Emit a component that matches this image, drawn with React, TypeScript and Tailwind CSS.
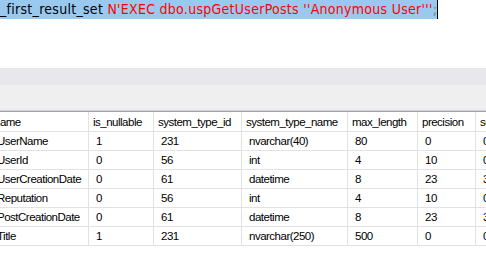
import React from "react";

const columns = [
  { key: "name", label: "name", width: "w-[99px]" },
  { key: "is_nullable", label: "is_nullable", width: "w-[65px]" },
  { key: "system_type_id", label: "system_type_id", width: "w-[88px]" },
  { key: "system_type_name", label: "system_type_name", width: "w-[106px]" },
  { key: "max_length", label: "max_length", width: "w-[70px]" },
  { key: "precision", label: "precision", width: "w-[58px]" },
  { key: "scale", label: "scale", width: "w-[60px]" },
];

const rows = [
  ["UserName", "1", "231", "nvarchar(40)", "80", "0", "0"],
  ["UserId", "0", "56", "int", "4", "10", "0"],
  ["UserCreationDate", "0", "61", "datetime", "8", "23", "3"],
  ["Reputation", "0", "56", "int", "4", "10", "0"],
  ["PostCreationDate", "0", "61", "datetime", "8", "23", "3"],
  ["Title", "1", "231", "nvarchar(250)", "500", "0", "0"],
];

const gridFont = { fontFamily: '"Liberation Sans", Arial, sans-serif' };

export default function App() {
  return (
    <div className="w-[486px] h-[255px] overflow-hidden bg-white">
      {/* query line */}
      <div
        className="h-[19px] leading-[19px] text-[14px] whitespace-nowrap flex"
        style={{ fontFamily: '"DejaVu Sans Condensed", "DejaVu Sans", sans-serif' }}
      >
        <span className="bg-[#99c9ef] font-stretch-condensed tracking-[0.28px]">
          <span className="text-black">_first_result_set </span>
          <span className="text-[#ff0000]">N'EXEC dbo.uspGetUserPosts ''Anonymous User'''</span>
          <span className="text-[#808080]">;</span>
        </span>
        <span className="w-px h-[19px] bg-black" />
      </div>

      <div className="h-[49px]" />
      <div className="h-[17px] bg-[#e7e7ec]" />
      <div className="h-[25px] bg-[#efefef]" />
      <div className="h-px bg-[#d2d2d6]" />
      <div className="h-px bg-[#a3a3a8]" />

      {/* results grid */}
      <div className="-ml-[10px] text-[11.5px] tracking-[-0.5px] text-black whitespace-nowrap" style={gridFont}>
        <div className="flex border-b border-[#e2e2e2]">
          {columns.map((c) => (
            <div
              key={c.key}
              className={`${c.width} shrink-0 h-[19px] pt-[2px] pl-[4px] leading-[17px] border-r border-[#e2e2e2] overflow-hidden`}
            >
              {c.label}
            </div>
          ))}
        </div>
        {rows.map((r, i) => (
          <div key={i} className="flex border-b border-[#e2e2e2]">
            {r.map((v, j) => (
              <div
                key={j}
                className={`${columns[j].width} shrink-0 h-[18px] pl-[7px] leading-[18px] border-r border-[#e2e2e2] overflow-hidden`}
              >
                {v}
              </div>
            ))}
          </div>
        ))}
      </div>
    </div>
  );
}
